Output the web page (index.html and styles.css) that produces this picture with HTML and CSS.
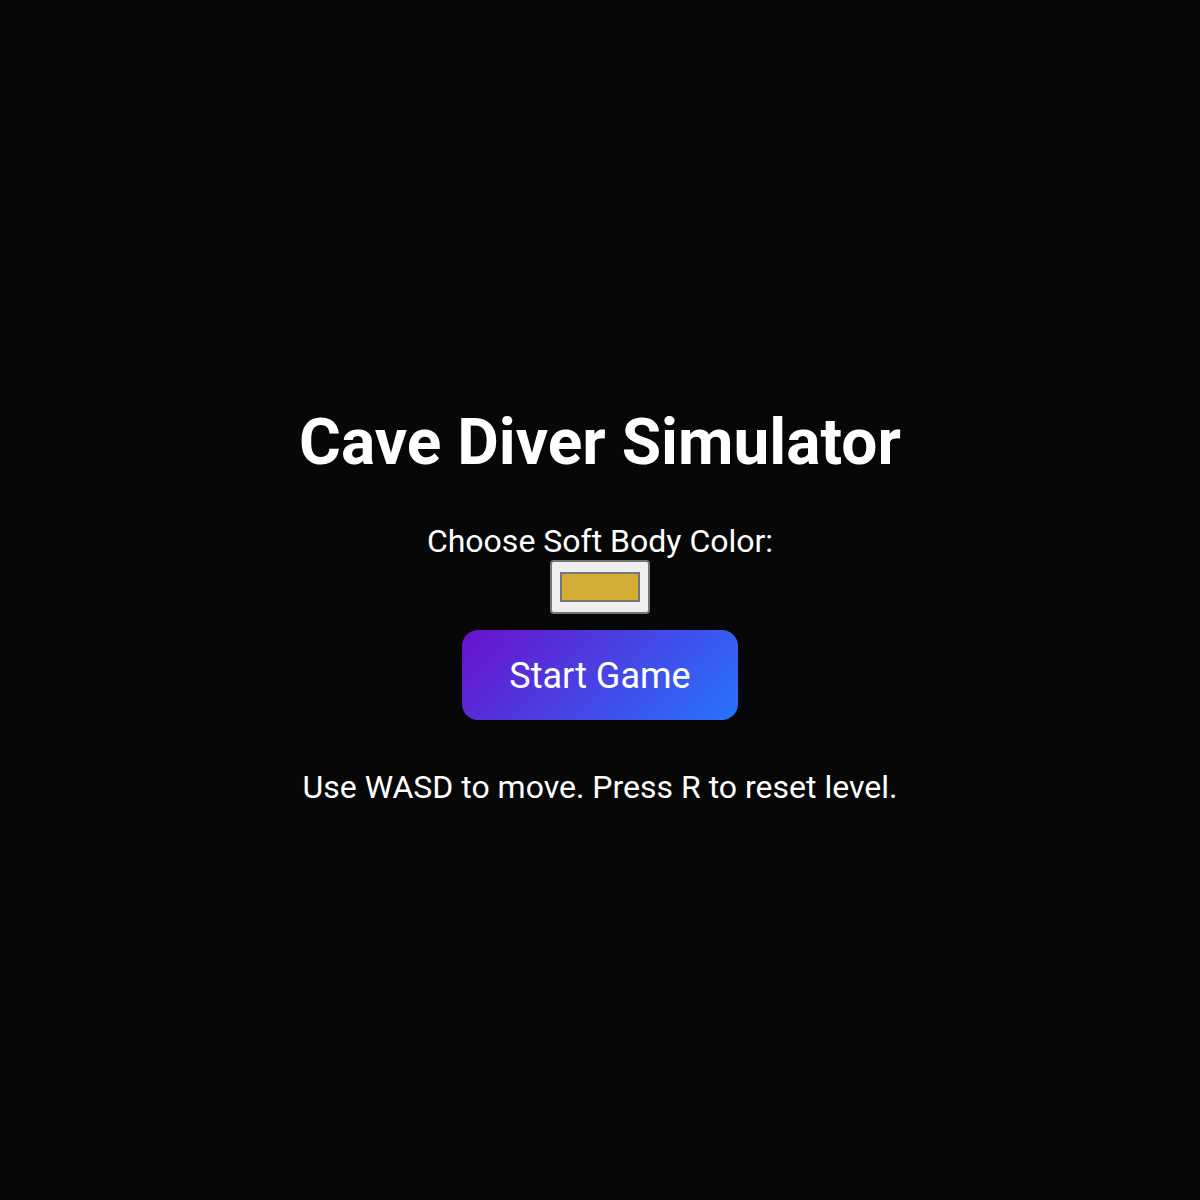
FILE: index.html
```html
<!DOCTYPE html>
<html lang="en">
<head>
<meta charset="utf-8">
<title>Cave Diver Simulator</title>
<link rel="stylesheet" href="styles.css">
</head>
<body>
<main class="menu">
  <h1 class="title">Cave Diver Simulator</h1>
  <label class="label" for="body-color">Choose Soft Body Color:</label>
  <input class="color" type="color" id="body-color" value="#d4af37">
  <button class="start" type="button">Start Game</button>
  <p class="hint">Use WASD to move. Press R to reset level.</p>
</main>
</body>
</html>
```

FILE: styles.css
```css
body {
  margin: 0;
  background: #070707;
  color: #fff;
  font-family: Roboto, sans-serif;
}

.menu {
  box-sizing: border-box;
  min-height: 100vh;
  padding-top: 11px;
  display: flex;
  flex-direction: column;
  align-items: center;
  justify-content: center;
  text-align: center;
  font-size: 32px;
  line-height: 38px;
}

.title {
  margin: 0 0 41px;
  font-size: 64px;
  line-height: 76px;
  font-weight: 700;
}

.color {
  box-sizing: border-box;
  width: 100px;
  height: 54px;
  padding: 2px 4px;
  border: 2px solid #767676;
  border-radius: 4px;
  background: #efefef;
}

.color::-webkit-color-swatch-wrapper {
  padding: 8px 4px;
}

.color::-webkit-color-swatch {
  border: 2px solid #777;
}

.start {
  margin: 16px 0 48px;
  padding: 25px 47px 23px;
  border: 0;
  border-radius: 16px;
  background: linear-gradient(135deg, #6a11cb, #2575fc);
  color: #fff;
  font-family: inherit;
  font-size: 36px;
  line-height: 42px;
}

.hint {
  margin: 0;
}
```
